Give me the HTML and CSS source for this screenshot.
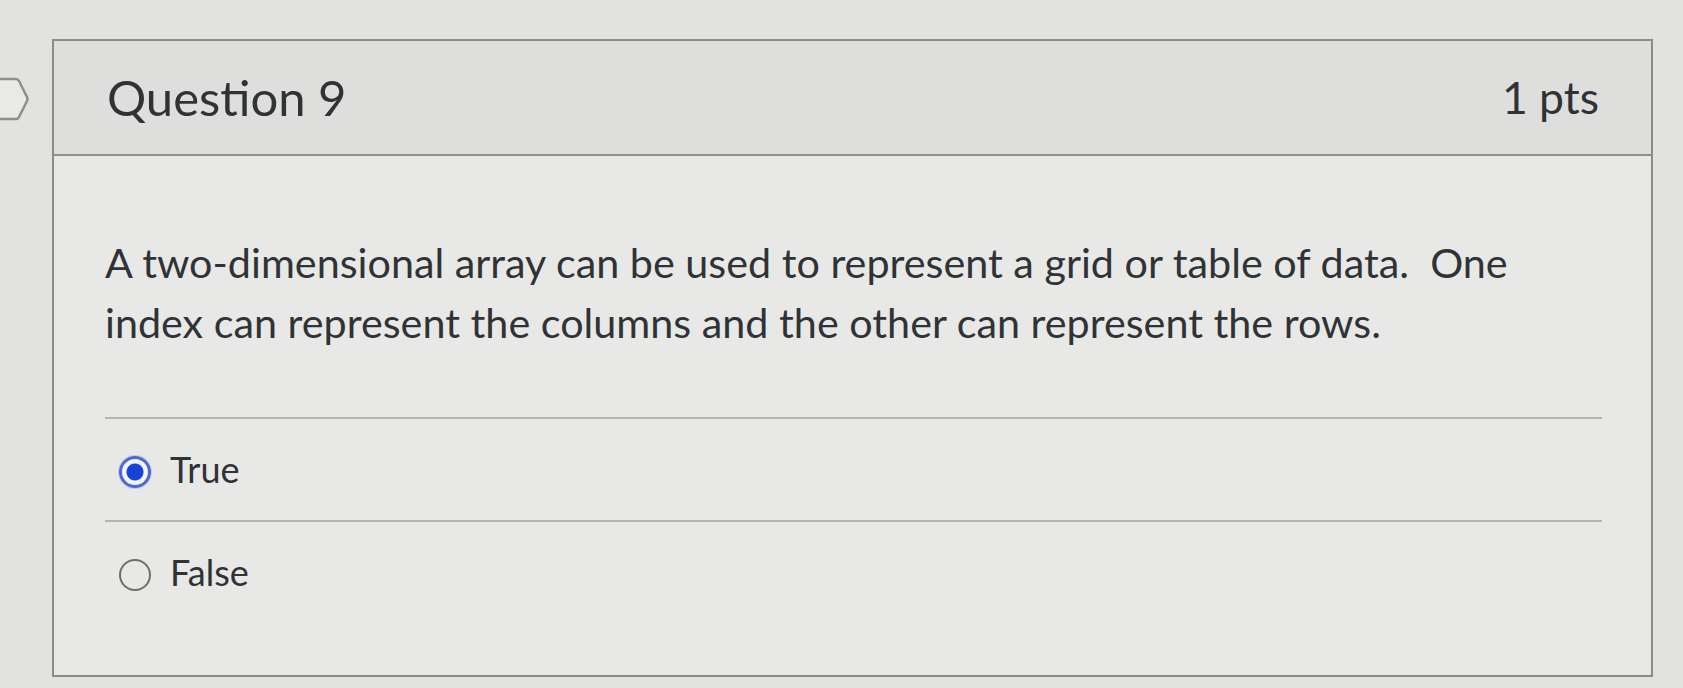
FILE: index.html
```html
<!DOCTYPE html>
<html lang="en">
<head>
<meta charset="utf-8">
<title>Question 9</title>
<link rel="stylesheet" href="styles.css">
</head>
<body>
<div class="page">
  <div class="flag-col">
    <svg class="flag" width="30" height="44" viewBox="0 0 30 44" aria-hidden="true">
      <path d="M-4 2 H16 Q18 2 19 4 L27 20 Q28 22 27 24 L19 40 Q18 42 16 42 H-4" fill="#e9eae8" stroke="#8e8f8d" stroke-width="2.5" stroke-linejoin="round"/>
    </svg>
  </div>
  <div class="card">
    <div class="card-header">
      <span class="q-name">Question 9</span>
      <span class="q-points">1 pts</span>
    </div>
    <div class="card-body">
      <p class="q-text">A two-dimensional array can be used to represent a grid or table of data.&nbsp; One index can represent the columns and the other can represent the rows.</p>
      <div class="answers">
        <label class="answer">
          <span class="radio checked"></span>
          <span class="answer-text">True</span>
        </label>
        <label class="answer">
          <span class="radio"></span>
          <span class="answer-text">False</span>
        </label>
      </div>
    </div>
  </div>
</div>
</body>
</html>
```

FILE: styles.css
```css
* { box-sizing: border-box; }

html, body {
  margin: 0;
  padding: 0;
  background: #e2e3e1;
}

body {
  font-family: Lato, "Open Sans", "Liberation Sans", sans-serif;
  color: #303336;
}

.page {
  display: flex;
  align-items: flex-start;
  padding-top: 39px;
  height: 688px;
  overflow: hidden;
}

.flag-col {
  flex: none;
  width: 52px;
}

.flag {
  display: block;
  margin-top: 38px;
}

.card {
  flex: none;
  width: 1601px;
  height: 638px;
  border: 2px solid #8b8c8a;
  background: #e8e9e7;
  display: flex;
  flex-direction: column;
}

.card-header {
  flex: none;
  height: 115px;
  background: #dedfdd;
  border-bottom: 2px solid #8f908e;
  display: flex;
  justify-content: space-between;
  align-items: flex-start;
  padding: 33px 52px 0 53px;
}

.q-name {
  font-size: 49px;
  line-height: 46px;
}

.q-points {
  font-size: 44.5px;
  line-height: 46px;
}

.card-body {
  flex: 1;
  padding: 76px 49px 0 51px;
}

.q-text {
  margin: 0 0 65px;
  font-size: 41.3px;
  line-height: 60px;
}

.answers {
  display: flex;
  flex-direction: column;
}

.answer {
  display: flex;
  align-items: flex-start;
  gap: 19px;
  height: 103px;
  padding: 32px 0 0 14px;
  border-top: 2px solid #b4b5b3;
}

.radio {
  flex: none;
  width: 32px;
  height: 32px;
  margin-top: 5px;
  border-radius: 50%;
  border: 2.5px solid #6d6e6c;
}

.radio.checked {
  border: 3px solid #5266d2;
  background: radial-gradient(circle, #1744d8 0 8px, #f3f4fa 9px);
  box-shadow: 0 0 0 1px rgba(120, 140, 230, 0.35);
}

.answer-text {
  font-size: 36px;
  line-height: 36px;
}
```
